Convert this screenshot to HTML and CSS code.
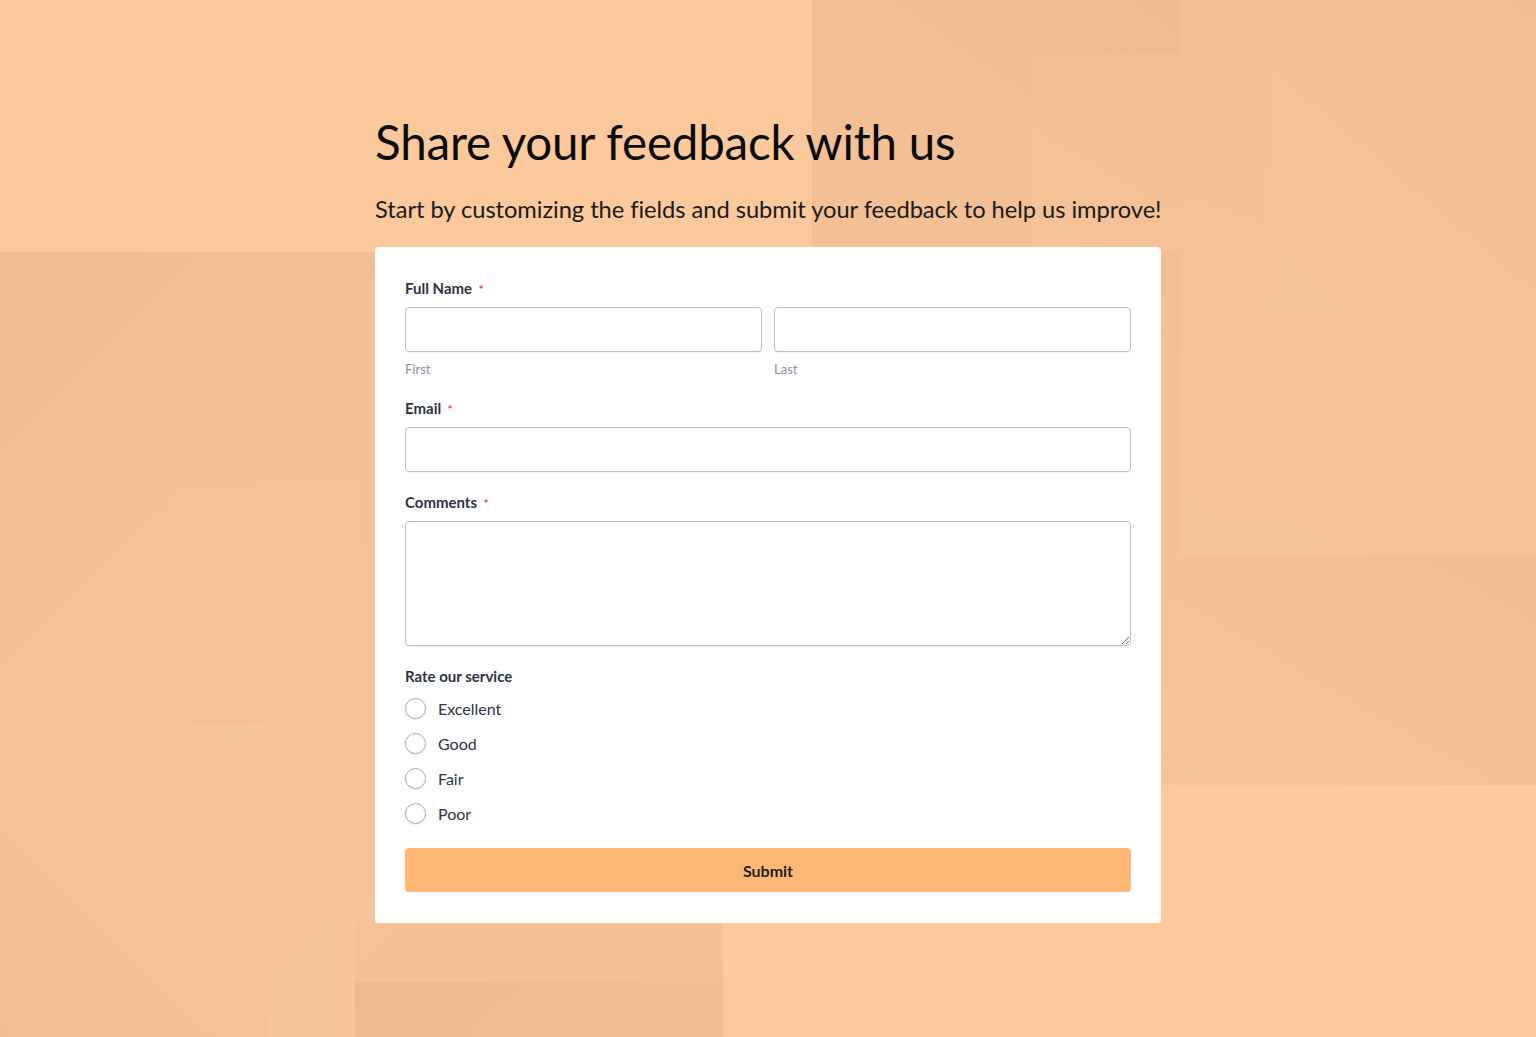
FILE: index.html
```html
<!DOCTYPE html>
<html lang="en">
<head>
<meta charset="utf-8">
<title>Share your feedback with us</title>
<link rel="stylesheet" href="styles.css">
</head>
<body>
<div class="bg" aria-hidden="true">
  <div class="tile t1"></div>
  <div class="tile t2"></div>
  <div class="tile t3"></div>
  <div class="tile t4"></div>
  <div class="tile t5"></div>
  <div class="tile t6"></div>
  <div class="tile t7"></div>
  <div class="tile t8"></div>
  <div class="tile t9"></div>
  <div class="tile t10"></div>
</div>
<main class="page">
  <h1 class="title">Share your feedback with us</h1>
  <p class="subtitle">Start by customizing the fields and submit your feedback to help us improve!</p>
  <form class="card">
    <div class="field first">
      <div class="label">Full Name <span class="req">*</span></div>
      <div class="name-row">
        <div class="name-col">
          <input class="input" type="text">
          <div class="sublabel">First</div>
        </div>
        <div class="name-col">
          <input class="input" type="text">
          <div class="sublabel">Last</div>
        </div>
      </div>
    </div>
    <div class="field">
      <div class="label">Email <span class="req">*</span></div>
      <input class="input" type="email">
    </div>
    <div class="field">
      <div class="label">Comments <span class="req">*</span></div>
      <textarea class="textarea"></textarea>
    </div>
    <div class="field rate">
      <div class="label">Rate our service</div>
      <div class="options">
        <label class="option"><span class="radio"></span>Excellent</label>
        <label class="option"><span class="radio"></span>Good</label>
        <label class="option"><span class="radio"></span>Fair</label>
        <label class="option"><span class="radio"></span>Poor</label>
      </div>
    </div>
    <button class="submit" type="button">Submit</button>
  </form>
</main>
</body>
</html>
```

FILE: styles.css
```css
* { box-sizing: border-box; }
html, body { margin: 0; padding: 0; }
body {
  width: 1536px;
  height: 1037px;
  overflow: hidden;
  background: #fcc99d;
  font-family: "Lato", "Open Sans", sans-serif;
  position: relative;
}
.bg { position: absolute; inset: 0; z-index: 0; }
.tile { position: absolute; }
.t1 { left: 812px; top: 0; width: 369px; height: 555px; background: linear-gradient(215deg, #efba8e, #f3c095 45%, #f4c196); }
.t2 { left: 1032px; top: 54px; width: 149px; height: 198px; background: linear-gradient(210deg, #f2be92, #f5c398); }
.t3 { left: 1181px; top: 0; width: 355px; height: 555px; background: linear-gradient(200deg, #f1bc90, #f7c59a); }
.t4 { left: 1270px; top: 0; width: 266px; height: 313px; background: linear-gradient(220deg, #f1bd91, #f6c499); }
.t5 { left: 0; top: 252px; width: 375px; height: 785px; background: linear-gradient(135deg, #f1bc90, #f6c398); }
.t6 { left: 0; top: 482px; width: 355px; height: 555px; background: linear-gradient(135deg, #f3bf93, #f7c59a); }
.t7 { left: 0; top: 724px; width: 266px; height: 313px; background: linear-gradient(45deg, #f2bd91, #f7c59a); }
.t8 { left: 355px; top: 924px; width: 368px; height: 113px; background: linear-gradient(135deg, #f4c196, #f2be92); }
.t9 { left: 355px; top: 982px; width: 368px; height: 55px; background: linear-gradient(135deg, #eeb98d, #f1bd91); }
.t10 { left: 1161px; top: 555px; width: 375px; height: 230px; background: linear-gradient(210deg, #f1bc90, #f6c499); }

.page {
  position: relative;
  z-index: 1;
  width: 786px;
  padding-top: 112px;
  margin-left: 375px;
}
.title {
  margin: 0;
  font-family: "Lato", sans-serif;
  font-weight: 400;
  font-size: 47.5px;
  line-height: 60px;
  color: #0b0b0b;
  letter-spacing: -0.2px;
}
.subtitle {
  margin: 22px 0 0 0;
  font-size: 23.7px;
  line-height: 30px;
  color: #1a1a1a;
  letter-spacing: -0.05px;
  white-space: nowrap;
}
.card {
  margin-top: 23px;
  background: #fff;
  border-radius: 4px;
  padding: 32px 30px 31px 30px;
  display: flex;
  flex-direction: column;
}
.field { display: flex; flex-direction: column; margin-bottom: 21px; }
.field.first { margin-bottom: 23px; }
.label {
  font-size: 15px;
  font-weight: 700;
  color: #2c3345;
  line-height: 18px;
  height: 18px;
  margin-bottom: 10px;
}
.req { color: #f23a3c; font-size: 11px; line-height: 0; vertical-align: 0; margin-left: 3px; }
.name-row { display: flex; gap: 12px; }
.name-col { flex: 1; display: flex; flex-direction: column; }
.input {
  height: 45px;
  border: 1px solid #b8bdc9;
  border-radius: 4px;
  background: #fff;
  font: inherit;
  width: 100%;
  box-shadow: 0 1px 2px rgba(0,0,0,0.06);
}
.sublabel { font-size: 13px; color: #8d8fa8; margin-top: 10px; line-height: 14px; }
.textarea {
  height: 125px;
  border: 1px solid #b8bdc9;
  border-radius: 4px;
  resize: vertical;
  font: inherit;
  width: 100%;
  box-shadow: 0 1px 2px rgba(0,0,0,0.06);
}
.rate { margin-bottom: 24px; }
.rate .label { margin-bottom: 13px; }
.options { display: flex; flex-direction: column; gap: 14px; }
.option {
  display: flex;
  align-items: center;
  gap: 12px;
  font-size: 16px;
  color: #2c3345;
  line-height: 20px;
}
.radio {
  width: 21px;
  height: 21px;
  border: 1px solid #a3a8b4;
  border-radius: 50%;
  background: #fff;
  box-shadow: 0 1px 2px rgba(0,0,0,0.08);
  flex: none;
}
.submit {
  height: 44px;
  border: 0;
  border-radius: 4px;
  background: #ffb775;
  font-family: "Lato", sans-serif;
  font-size: 16px;
  font-weight: 700;
  color: #1f1f1f;
  width: 100%;
}
```
